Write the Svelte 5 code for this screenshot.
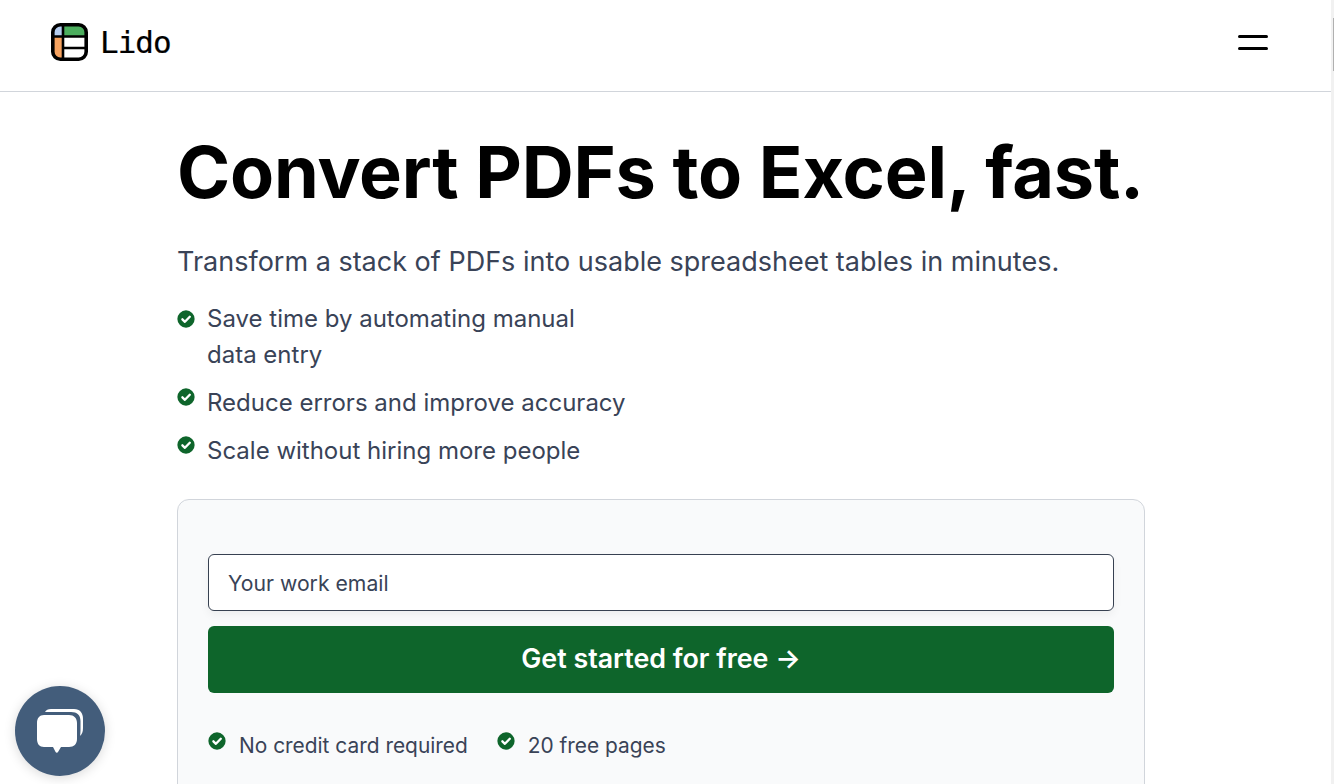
<script>
  const points = ['Save time by automating manual data entry', 'Reduce errors and improve accuracy', 'Scale without hiring more people'];
  const perks = ['No credit card required', '20 free pages'];
</script>

{#snippet check()}
  <svg class="check" viewBox="0 0 20 20" aria-hidden="true">
    <circle cx="10" cy="10" r="9.6" fill="#0e652b" />
    <path d="M6 10.400l2.800 2.700L14.200 7.500" fill="none" stroke="#fff" stroke-width="2.600" stroke-linecap="round" stroke-linejoin="round" />
  </svg>
{/snippet}

<div class="page">
  <header>
    <a class="logo" href="#top">
      <svg viewBox="0 0 37 38" width="37" height="38" aria-hidden="true">
        <rect x="1.8" y="1.8" width="33.400" height="34.400" rx="7.500" fill="#fff" />
        <path d="M12 3H8a5 5 0 0 0-5 5v5.500h9z" fill="#b5cdf0" />
        <path d="M12 3h17a5 5 0 0 1 5 5v5.500H12z" fill="#4cae5e" />
        <path d="M3 13.500h9V35H8a5 5 0 0 1-5-5z" fill="#f6a25f" />
        <rect x="1.8" y="1.8" width="33.400" height="34.400" rx="7.500" fill="none" stroke="#000" stroke-width="3.600" />
        <path d="M2 13.500h33M12 2v34M12 25h23" stroke="#000" stroke-width="2.600" fill="none" />
      </svg>
      <span>Lido</span>
    </a>
    <button class="menu" aria-label="Open menu"><i></i><i></i></button>
  </header>

  <main>
    <h1>Convert PDFs to Excel, fast.</h1>
    <p class="lead">Transform a stack of PDFs into usable spreadsheet tables in minutes.</p>
    <ul class="points">
      {#each points as point}
        <li>{@render check()}<span>{point}</span></li>
      {/each}
    </ul>
    <section class="card">
      <div class="email">Your work email</div>
      <button class="cta">Get started for free →</button>
      <div class="perks">
        {#each perks as perk}
          <div class="perk">{@render check()}<span>{perk}</span></div>
        {/each}
      </div>
    </section>
  </main>

  <button class="chat" aria-label="Open chat">
    <svg viewBox="0 0 60 60" width="60" height="60" aria-hidden="true">
      <path d="M15 11C16 9 18 8 21 8H44C50 8 53 12 53 18V27C53 31 52 33 50 35C50.500 32 50.500 30 50.500 26V20C50.500 14 47 11 41 11z" fill="#fff" />
      <path d="M14 14H39C44 14 47 17 47 22V38C47 43 44 46 39 46H31L28 51a1.300 1.300 0 0 1-2.400 0L23 46H14C9.500 46 7 43 7 38V22C7 17 9.500 14 14 14z" fill="#fff" />
    </svg>
  </button>

  <div class="track"><div class="thumb"></div></div>
</div>

<style>
  :global(html), :global(body) {
    margin: 0;
    height: 100%;
    overflow: hidden;
    background: #fff;
  }
  .page {
    position: relative;
    height: 784px;
    width: 1334px;
    overflow: hidden;
    font-family: Inter, "Liberation Sans", sans-serif;
    color: #394357;
  }
  header {
    box-sizing: border-box;
    width: 1331px;
    height: 92px;
    border-bottom: 1px solid #d1d5db;
    display: flex;
    align-items: center;
    justify-content: space-between;
    padding: 0 63px 7px 51px;
  }
  .logo {
    display: flex;
    align-items: center;
    gap: 12px;
    color: #000;
    text-decoration: none;
    font-family: "DejaVu Sans Mono", monospace;
    font-size: 31px;
    line-height: 38px;
    letter-spacing: -1px;
    -webkit-text-stroke: 0.2px #000;
  }
  .menu {
    display: flex;
    flex-direction: column;
    gap: 9px;
    padding: 0;
    border: 0;
    background: none;
  }
  .menu i {
    display: block;
    width: 30px;
    height: 3px;
    border-radius: 2px;
    background: #000;
  }
  main {
    width: 968px;
    margin-left: 177px;
  }
  h1 {
    margin: 35px 0 0;
    font-size: 72px;
    line-height: 90px;
    font-weight: 700;
    letter-spacing: -0.2px;
    color: #000;
    white-space: nowrap;
  }
  .lead {
    margin: 25px 0 0;
    font-size: 27px;
    line-height: 40px;
  }
  .points {
    list-style: none;
    margin: 19px 0 0;
    padding: 0;
    font-size: 24px;
    line-height: 36px;
  }
  .points li {
    display: flex;
    gap: 12px;
    margin-top: 12px;
  }
  .points li:first-child {
    margin-top: 0;
  }
  .points li:first-child span {
    max-width: 380px;
  }
  .check {
    flex: none;
    width: 18px;
    height: 18px;
    margin-top: 3px;
  }
  .points li:first-child .check {
    margin-top: 9px;
  }
  .perk .check {
    margin-top: 4px;
  }
  .card {
    box-sizing: border-box;
    height: 320px;
    margin-top: 30px;
    padding: 54px 30px 0;
    border: 1px solid #d1d5db;
    border-radius: 12px;
    background: #f9fafb;
  }
  .email {
    box-sizing: border-box;
    height: 57px;
    padding-left: 19px;
    border: 1px solid #374151;
    border-radius: 6px;
    background: #fff;
    box-shadow: 0 4px 10px rgba(0, 0, 0, 0.05);
    font-size: 21.2px;
    line-height: 56px;
  }
  .cta {
    display: block;
    width: 100%;
    height: 67px;
    margin-top: 15px;
    padding: 0 0 4px;
    border: 0;
    border-radius: 6px;
    background: #0e652b;
    color: #fff;
    font: 600 26.800px Inter, sans-serif;
  }
  .perks {
    display: flex;
    gap: 29px;
    margin-top: 35px;
    font-size: 20.9px;
    line-height: 35px;
  }
  .perk {
    display: flex;
    gap: 13px;
  }
  .chat {
    position: absolute;
    left: 15px;
    top: 686px;
    width: 90px;
    height: 90px;
    padding: 0;
    border: 0;
    border-radius: 50%;
    background: #435d7b;
    box-shadow: 0 2px 12px rgba(0, 0, 0, 0.15);
    display: flex;
    align-items: center;
    justify-content: center;
  }
  .track {
    position: absolute;
    top: 0;
    right: 0;
    width: 3px;
    height: 100%;
    background: #f1f1f1;
  }
  .thumb {
    width: 1px;
    height: 53px;
    margin: 18px 0 0 2px;
    background: #b0b0b0;
  }
</style>
